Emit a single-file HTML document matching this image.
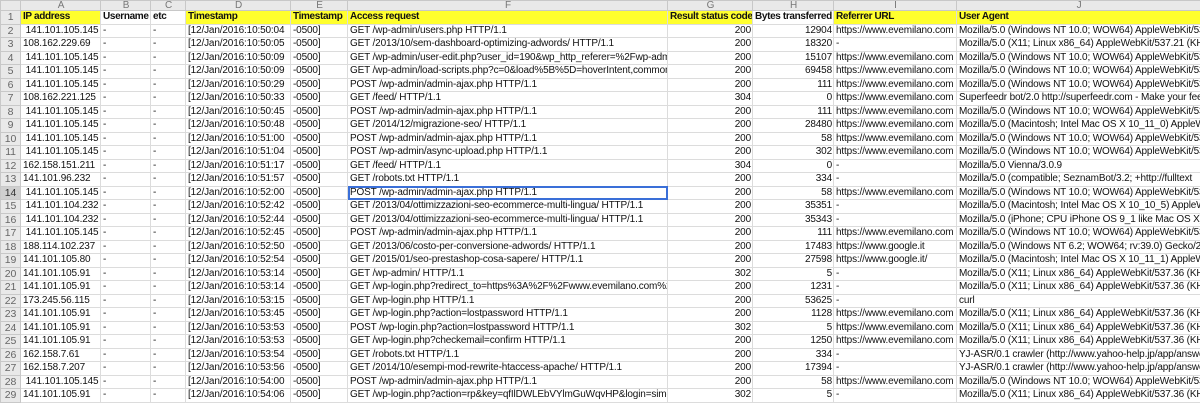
<!DOCTYPE html>
<html><head><meta charset="utf-8">
<style>
body{margin:0;width:1200px;height:400px;overflow:hidden;background:#fff;font-family:"Liberation Sans",Arial,sans-serif;font-size:10px;letter-spacing:-0.15px;color:#111}
table{border-collapse:collapse;table-layout:fixed;width:1200px}
td{border:1px solid #dcdcdc;height:12.5px;padding:0 1px 0 2px;white-space:nowrap;overflow:hidden;line-height:12px}
tr.h td{height:9px;background:#e9e9e9;color:#777;text-align:center;border-color:#c8c8c8;font-size:10px;line-height:9px;overflow:hidden}
td.n{background:#e9e9e9;color:#666;text-align:center;border-color:#c8c8c8;font-size:10.5px;padding:0}
td.r{text-align:right}
tr.t td{font-weight:bold;letter-spacing:-0.35px}
tr.t td.y{background:#ffff2e}
td.sel{outline:2px solid #3a6fd8;outline-offset:-2px}
td.nh{background:#cfcfcf;color:#333}
</style></head><body>
<table>
<colgroup><col style="width:20px"><col style="width:80px"><col style="width:50px"><col style="width:35px"><col style="width:105px"><col style="width:57px"><col style="width:320px"><col style="width:85px"><col style="width:81px"><col style="width:123px"><col style="width:244px"></colgroup>
<tr class="h"><td></td><td>A</td><td>B</td><td>C</td><td>D</td><td>E</td><td class="nh">F</td><td>G</td><td>H</td><td>I</td><td>J</td></tr>
<tr class="t"><td class="n" style="font-weight:normal">1</td><td class="y">IP address</td><td>Username</td><td>etc</td><td class="y">Timestamp</td><td class="y">Timestamp</td><td class="y">Access request</td><td class="y">Result status code</td><td>Bytes transferred</td><td class="y">Referrer URL</td><td class="y">User Agent</td></tr>
<tr><td class="n">2</td><td>&nbsp;141.101.105.145</td><td>-</td><td>-</td><td>[12/Jan/2016:10:50:04</td><td>-0500]</td><td>GET /wp-admin/users.php HTTP/1.1</td><td class="r">200</td><td class="r">12904</td><td>https://www.evemilano.com</td><td>Mozilla/5.0 (Windows NT 10.0; WOW64) AppleWebKit/537.36</td></tr>
<tr><td class="n">3</td><td>108.162.229.69</td><td>-</td><td>-</td><td>[12/Jan/2016:10:50:05</td><td>-0500]</td><td>GET /2013/10/sem-dashboard-optimizing-adwords/ HTTP/1.1</td><td class="r">200</td><td class="r">18320</td><td>-</td><td>Mozilla/5.0 (X11; Linux x86_64) AppleWebKit/537.21 (KHTML</td></tr>
<tr><td class="n">4</td><td>&nbsp;141.101.105.145</td><td>-</td><td>-</td><td>[12/Jan/2016:10:50:09</td><td>-0500]</td><td>GET /wp-admin/user-edit.php?user_id=190&amp;wp_http_referer=%2Fwp-admin</td><td class="r">200</td><td class="r">15107</td><td>https://www.evemilano.com</td><td>Mozilla/5.0 (Windows NT 10.0; WOW64) AppleWebKit/537.36</td></tr>
<tr><td class="n">5</td><td>&nbsp;141.101.105.145</td><td>-</td><td>-</td><td>[12/Jan/2016:10:50:09</td><td>-0500]</td><td>GET /wp-admin/load-scripts.php?c=0&amp;load%5B%5D=hoverIntent,common</td><td class="r">200</td><td class="r">69458</td><td>https://www.evemilano.com</td><td>Mozilla/5.0 (Windows NT 10.0; WOW64) AppleWebKit/537.36</td></tr>
<tr><td class="n">6</td><td>&nbsp;141.101.105.145</td><td>-</td><td>-</td><td>[12/Jan/2016:10:50:29</td><td>-0500]</td><td>POST /wp-admin/admin-ajax.php HTTP/1.1</td><td class="r">200</td><td class="r">111</td><td>https://www.evemilano.com</td><td>Mozilla/5.0 (Windows NT 10.0; WOW64) AppleWebKit/537.36</td></tr>
<tr><td class="n">7</td><td>108.162.221.125</td><td>-</td><td>-</td><td>[12/Jan/2016:10:50:33</td><td>-0500]</td><td>GET /feed/ HTTP/1.1</td><td class="r">304</td><td class="r">0</td><td>https://www.evemilano.com</td><td>Superfeedr bot/2.0 http://superfeedr.com - Make your feeds</td></tr>
<tr><td class="n">8</td><td>&nbsp;141.101.105.145</td><td>-</td><td>-</td><td>[12/Jan/2016:10:50:45</td><td>-0500]</td><td>POST /wp-admin/admin-ajax.php HTTP/1.1</td><td class="r">200</td><td class="r">111</td><td>https://www.evemilano.com</td><td>Mozilla/5.0 (Windows NT 10.0; WOW64) AppleWebKit/537.36</td></tr>
<tr><td class="n">9</td><td>&nbsp;141.101.105.145</td><td>-</td><td>-</td><td>[12/Jan/2016:10:50:48</td><td>-0500]</td><td>GET /2014/12/migrazione-seo/ HTTP/1.1</td><td class="r">200</td><td class="r">28480</td><td>https://www.evemilano.com</td><td>Mozilla/5.0 (Macintosh; Intel Mac OS X 10_11_0) AppleWebKit</td></tr>
<tr><td class="n">10</td><td>&nbsp;141.101.105.145</td><td>-</td><td>-</td><td>[12/Jan/2016:10:51:00</td><td>-0500]</td><td>POST /wp-admin/admin-ajax.php HTTP/1.1</td><td class="r">200</td><td class="r">58</td><td>https://www.evemilano.com</td><td>Mozilla/5.0 (Windows NT 10.0; WOW64) AppleWebKit/537.36</td></tr>
<tr><td class="n">11</td><td>&nbsp;141.101.105.145</td><td>-</td><td>-</td><td>[12/Jan/2016:10:51:04</td><td>-0500]</td><td>POST /wp-admin/async-upload.php HTTP/1.1</td><td class="r">200</td><td class="r">302</td><td>https://www.evemilano.com</td><td>Mozilla/5.0 (Windows NT 10.0; WOW64) AppleWebKit/537.36</td></tr>
<tr><td class="n">12</td><td>162.158.151.211</td><td>-</td><td>-</td><td>[12/Jan/2016:10:51:17</td><td>-0500]</td><td>GET /feed/ HTTP/1.1</td><td class="r">304</td><td class="r">0</td><td>-</td><td>Mozilla/5.0 Vienna/3.0.9</td></tr>
<tr><td class="n">13</td><td>141.101.96.232</td><td>-</td><td>-</td><td>[12/Jan/2016:10:51:57</td><td>-0500]</td><td>GET /robots.txt HTTP/1.1</td><td class="r">200</td><td class="r">334</td><td>-</td><td>Mozilla/5.0 (compatible; SeznamBot/3.2; +http://fulltext</td></tr>
<tr><td class="n nh">14</td><td>&nbsp;141.101.105.145</td><td>-</td><td>-</td><td>[12/Jan/2016:10:52:00</td><td>-0500]</td><td class="sel">POST /wp-admin/admin-ajax.php HTTP/1.1</td><td class="r">200</td><td class="r">58</td><td>https://www.evemilano.com</td><td>Mozilla/5.0 (Windows NT 10.0; WOW64) AppleWebKit/537.36</td></tr>
<tr><td class="n">15</td><td>&nbsp;141.101.104.232</td><td>-</td><td>-</td><td>[12/Jan/2016:10:52:42</td><td>-0500]</td><td>GET /2013/04/ottimizzazioni-seo-ecommerce-multi-lingua/ HTTP/1.1</td><td class="r">200</td><td class="r">35351</td><td>-</td><td>Mozilla/5.0 (Macintosh; Intel Mac OS X 10_10_5) AppleWebKit</td></tr>
<tr><td class="n">16</td><td>&nbsp;141.101.104.232</td><td>-</td><td>-</td><td>[12/Jan/2016:10:52:44</td><td>-0500]</td><td>GET /2013/04/ottimizzazioni-seo-ecommerce-multi-lingua/ HTTP/1.1</td><td class="r">200</td><td class="r">35343</td><td>-</td><td>Mozilla/5.0 (iPhone; CPU iPhone OS 9_1 like Mac OS X) AppleWebKit</td></tr>
<tr><td class="n">17</td><td>&nbsp;141.101.105.145</td><td>-</td><td>-</td><td>[12/Jan/2016:10:52:45</td><td>-0500]</td><td>POST /wp-admin/admin-ajax.php HTTP/1.1</td><td class="r">200</td><td class="r">111</td><td>https://www.evemilano.com</td><td>Mozilla/5.0 (Windows NT 10.0; WOW64) AppleWebKit/537.36</td></tr>
<tr><td class="n">18</td><td>188.114.102.237</td><td>-</td><td>-</td><td>[12/Jan/2016:10:52:50</td><td>-0500]</td><td>GET /2013/06/costo-per-conversione-adwords/ HTTP/1.1</td><td class="r">200</td><td class="r">17483</td><td>https://www.google.it</td><td>Mozilla/5.0 (Windows NT 6.2; WOW64; rv:39.0) Gecko/20100101</td></tr>
<tr><td class="n">19</td><td>141.101.105.80</td><td>-</td><td>-</td><td>[12/Jan/2016:10:52:54</td><td>-0500]</td><td>GET /2015/01/seo-prestashop-cosa-sapere/ HTTP/1.1</td><td class="r">200</td><td class="r">27598</td><td>https://www.google.it/</td><td>Mozilla/5.0 (Macintosh; Intel Mac OS X 10_11_1) AppleWebKit</td></tr>
<tr><td class="n">20</td><td>141.101.105.91</td><td>-</td><td>-</td><td>[12/Jan/2016:10:53:14</td><td>-0500]</td><td>GET /wp-admin/ HTTP/1.1</td><td class="r">302</td><td class="r">5</td><td>-</td><td>Mozilla/5.0 (X11; Linux x86_64) AppleWebKit/537.36 (KHTML</td></tr>
<tr><td class="n">21</td><td>141.101.105.91</td><td>-</td><td>-</td><td>[12/Jan/2016:10:53:14</td><td>-0500]</td><td>GET /wp-login.php?redirect_to=https%3A%2F%2Fwww.evemilano.com%2Fwp-admin</td><td class="r">200</td><td class="r">1231</td><td>-</td><td>Mozilla/5.0 (X11; Linux x86_64) AppleWebKit/537.36 (KHTML</td></tr>
<tr><td class="n">22</td><td>173.245.56.115</td><td>-</td><td>-</td><td>[12/Jan/2016:10:53:15</td><td>-0500]</td><td>GET /wp-login.php HTTP/1.1</td><td class="r">200</td><td class="r">53625</td><td>-</td><td>curl</td></tr>
<tr><td class="n">23</td><td>141.101.105.91</td><td>-</td><td>-</td><td>[12/Jan/2016:10:53:45</td><td>-0500]</td><td>GET /wp-login.php?action=lostpassword HTTP/1.1</td><td class="r">200</td><td class="r">1128</td><td>https://www.evemilano.com</td><td>Mozilla/5.0 (X11; Linux x86_64) AppleWebKit/537.36 (KHTML</td></tr>
<tr><td class="n">24</td><td>141.101.105.91</td><td>-</td><td>-</td><td>[12/Jan/2016:10:53:53</td><td>-0500]</td><td>POST /wp-login.php?action=lostpassword HTTP/1.1</td><td class="r">302</td><td class="r">5</td><td>https://www.evemilano.com</td><td>Mozilla/5.0 (X11; Linux x86_64) AppleWebKit/537.36 (KHTML</td></tr>
<tr><td class="n">25</td><td>141.101.105.91</td><td>-</td><td>-</td><td>[12/Jan/2016:10:53:53</td><td>-0500]</td><td>GET /wp-login.php?checkemail=confirm HTTP/1.1</td><td class="r">200</td><td class="r">1250</td><td>https://www.evemilano.com</td><td>Mozilla/5.0 (X11; Linux x86_64) AppleWebKit/537.36 (KHTML</td></tr>
<tr><td class="n">26</td><td>162.158.7.61</td><td>-</td><td>-</td><td>[12/Jan/2016:10:53:54</td><td>-0500]</td><td>GET /robots.txt HTTP/1.1</td><td class="r">200</td><td class="r">334</td><td>-</td><td>YJ-ASR/0.1 crawler (http://www.yahoo-help.jp/app/answers</td></tr>
<tr><td class="n">27</td><td>162.158.7.207</td><td>-</td><td>-</td><td>[12/Jan/2016:10:53:56</td><td>-0500]</td><td>GET /2014/10/esempi-mod-rewrite-htaccess-apache/ HTTP/1.1</td><td class="r">200</td><td class="r">17394</td><td>-</td><td>YJ-ASR/0.1 crawler (http://www.yahoo-help.jp/app/answers</td></tr>
<tr><td class="n">28</td><td>&nbsp;141.101.105.145</td><td>-</td><td>-</td><td>[12/Jan/2016:10:54:00</td><td>-0500]</td><td>POST /wp-admin/admin-ajax.php HTTP/1.1</td><td class="r">200</td><td class="r">58</td><td>https://www.evemilano.com</td><td>Mozilla/5.0 (Windows NT 10.0; WOW64) AppleWebKit/537.36</td></tr>
<tr><td class="n">29</td><td>141.101.105.91</td><td>-</td><td>-</td><td>[12/Jan/2016:10:54:06</td><td>-0500]</td><td>GET /wp-login.php?action=rp&amp;key=qfIlDWLEbVYlmGuWqvHP&amp;login=simo</td><td class="r">302</td><td class="r">5</td><td>-</td><td>Mozilla/5.0 (X11; Linux x86_64) AppleWebKit/537.36 (KHTML</td></tr>
</table>
</body></html>
